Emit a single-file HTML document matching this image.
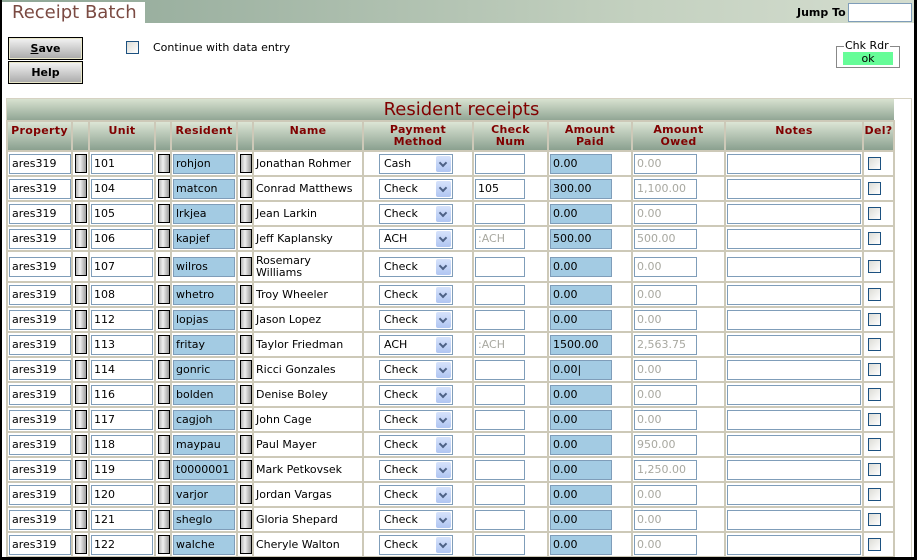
<!DOCTYPE html>
<html><head><meta charset="utf-8"><style>
*{box-sizing:border-box;margin:0;padding:0}
html,body{width:917px;height:560px;overflow:hidden}
body{background:#fff;font-family:"DejaVu Sans","Liberation Sans",sans-serif;font-size:11px;color:#000;position:relative}
.frame{position:absolute;left:0;top:0;width:917px;height:560px;border-left:2px solid #000;border-right:3px solid #000;border-bottom:3px solid #000}
.bar{position:absolute;left:2px;top:0;width:912px;height:23px;background:linear-gradient(90deg,#8ea696,#c4d1c0 70%,#d4ddcf)}
.tab{position:absolute;left:2px;top:2px;width:143px;height:21px;background:#fff;color:#7b4a42;font-size:18px;padding-left:10px;line-height:21px;white-space:nowrap}
.jump{position:absolute;left:797px;top:6px;font-weight:bold;font-size:11px}
.jin{position:absolute;left:848px;top:3px;width:64px;height:19px;border:1px solid #7f9db9;background:#fff}
.btn{position:absolute;left:8px;width:75px;height:23px;border:1px solid #000;background:linear-gradient(#f4f4f4,#a9a9a9);box-shadow:inset 0 0 0 1px #e8e6c8;text-align:center;font-weight:bold;line-height:21px;font-size:11px}
.cb{display:block;width:13px;height:13px;border:1px solid #1c5180;background:linear-gradient(135deg,#dcdcd6,#fff)}
.fs{position:absolute;left:836px;top:46px;width:64px;height:22px;border:1px solid #888}
.fs span{position:absolute;left:7px;top:-8px;background:#fff;padding:0 1px;font-size:11px}
.ok{position:absolute;left:6px;top:5px;width:50px;height:13px;background:#66fd98;text-align:center;line-height:13px}
.box{position:absolute;left:6px;top:98px;width:906px;height:460px;border:1px solid #d6d2c2;border-bottom:none}
.title{position:absolute;left:7px;top:99px;width:887px;height:22px;background:linear-gradient(#d8e2d0,#8ea392);color:#800000;font-size:18px;text-align:center;line-height:22px;padding-left:22px}
table{position:absolute;left:6px;top:120px;border-collapse:separate;border-spacing:2px;background:#cdc9b8;table-layout:fixed;width:889px}
td{background:#fff;height:23px;padding:0;vertical-align:middle;overflow:hidden;white-space:nowrap}
th{height:28px;background:linear-gradient(#dce5d5,#8aa08f);color:#800000;font-size:11px;font-weight:bold;line-height:12px;text-align:center;letter-spacing:.3px}
td.tall{height:29px}
.in{display:block;height:20px;border:1px solid #7f9db9;background:#fff;line-height:18px;padding-left:2px;font-size:11px}
.bl{background:#a3cbe3}
.gr{color:#a8a8a0}
.mb{display:block;width:12px;height:19px;border:1px solid #000;background:linear-gradient(90deg,#b8b8b8,#f0f0f0 40%,#9c9c9c);margin-left:2px}
.sel{display:block;width:74px;height:20px;border:1px solid #7f9db9;margin-left:15px;position:relative;line-height:18px;padding-left:4px}
.sel i{position:absolute;right:1px;top:1px;width:15px;height:16px;background:linear-gradient(#d6e2fb,#b0c6f2);border-radius:2px}
.sel i:after{content:"";position:absolute;left:4px;top:4px;width:4px;height:4px;border-right:2px solid #4d6185;border-bottom:2px solid #4d6185;transform:rotate(45deg)}
.nm{padding-left:2px;font-size:11px;white-space:normal;line-height:12px}
td .cb{margin-left:4px}
</style></head><body>
<div class="bar"></div>
<div class="tab">Receipt Batch</div>
<div class="jump">Jump To</div><div class="jin"></div>
<div class="btn" style="top:37px"><u>S</u>ave</div>
<div class="btn" style="top:61px">Help</div>
<span class="cb" style="position:absolute;left:126px;top:41px"></span>
<div style="position:absolute;left:153px;top:41px">Continue with data entry</div>
<div class="fs"><span>Chk Rdr</span><div class="ok">ok</div></div>
<div class="box"></div>
<div class="title">Resident receipts</div>
<table>
<colgroup><col style="width:63px"><col style="width:15px"><col style="width:64px"><col style="width:14px"><col style="width:64px"><col style="width:14px"><col style="width:108px"><col style="width:108px"><col style="width:73px"><col style="width:82px"><col style="width:91px"><col style="width:136px"><col style="width:29px"></colgroup>
<tr><th style="vertical-align:top;padding-top:3px">Property</th><th></th><th style="vertical-align:top;padding-top:3px">Unit</th><th></th><th style="vertical-align:top;padding-top:3px">Resident</th><th></th><th style="vertical-align:top;padding-top:3px">Name</th><th>Payment<br>Method</th><th>Check<br>Num</th><th>Amount<br>Paid</th><th>Amount<br>Owed</th><th style="vertical-align:top;padding-top:3px">Notes</th><th style="vertical-align:top;padding-top:3px">Del?</th></tr>
<tr><td><span class="in" style="margin-left:1px;width:62px">ares319</span></td><td><span class="mb"></span></td><td><span class="in" style="margin-left:1px;width:62px">101</span></td><td><span class="mb"></span></td><td><span class="in bl" style="margin-left:1px;width:62px">rohjon</span></td><td><span class="mb"></span></td><td class="nm">Jonathan Rohmer</td><td><span class="sel">Cash<i></i></span></td><td><span class="in" style="width:50px;margin-left:1px"></span></td><td><span class="in bl" style="width:62px;margin-left:1px">0.00</span></td><td><span class="in gr" style="width:63px;margin-left:1px">0.00</span></td><td><span class="in" style="width:134px;margin-left:1px"></span></td><td><span class="cb"></span></td></tr>
<tr><td><span class="in" style="margin-left:1px;width:62px">ares319</span></td><td><span class="mb"></span></td><td><span class="in" style="margin-left:1px;width:62px">104</span></td><td><span class="mb"></span></td><td><span class="in bl" style="margin-left:1px;width:62px">matcon</span></td><td><span class="mb"></span></td><td class="nm">Conrad Matthews</td><td><span class="sel">Check<i></i></span></td><td><span class="in" style="width:50px;margin-left:1px">105</span></td><td><span class="in bl" style="width:62px;margin-left:1px">300.00</span></td><td><span class="in gr" style="width:63px;margin-left:1px">1,100.00</span></td><td><span class="in" style="width:134px;margin-left:1px"></span></td><td><span class="cb"></span></td></tr>
<tr><td><span class="in" style="margin-left:1px;width:62px">ares319</span></td><td><span class="mb"></span></td><td><span class="in" style="margin-left:1px;width:62px">105</span></td><td><span class="mb"></span></td><td><span class="in bl" style="margin-left:1px;width:62px">lrkjea</span></td><td><span class="mb"></span></td><td class="nm">Jean Larkin</td><td><span class="sel">Check<i></i></span></td><td><span class="in" style="width:50px;margin-left:1px"></span></td><td><span class="in bl" style="width:62px;margin-left:1px">0.00</span></td><td><span class="in gr" style="width:63px;margin-left:1px">0.00</span></td><td><span class="in" style="width:134px;margin-left:1px"></span></td><td><span class="cb"></span></td></tr>
<tr><td><span class="in" style="margin-left:1px;width:62px">ares319</span></td><td><span class="mb"></span></td><td><span class="in" style="margin-left:1px;width:62px">106</span></td><td><span class="mb"></span></td><td><span class="in bl" style="margin-left:1px;width:62px">kapjef</span></td><td><span class="mb"></span></td><td class="nm">Jeff Kaplansky</td><td><span class="sel">ACH<i></i></span></td><td><span class="in gr" style="width:50px;margin-left:1px">:ACH</span></td><td><span class="in bl" style="width:62px;margin-left:1px">500.00</span></td><td><span class="in gr" style="width:63px;margin-left:1px">500.00</span></td><td><span class="in" style="width:134px;margin-left:1px"></span></td><td><span class="cb"></span></td></tr>
<tr><td class="tall"><span class="in" style="margin-left:1px;width:62px">ares319</span></td><td class="tall"><span class="mb"></span></td><td class="tall"><span class="in" style="margin-left:1px;width:62px">107</span></td><td class="tall"><span class="mb"></span></td><td class="tall"><span class="in bl" style="margin-left:1px;width:62px">wilros</span></td><td class="tall"><span class="mb"></span></td><td class="nm tall">Rosemary<br>Williams</td><td class="tall"><span class="sel">Check<i></i></span></td><td class="tall"><span class="in" style="width:50px;margin-left:1px"></span></td><td class="tall"><span class="in bl" style="width:62px;margin-left:1px">0.00</span></td><td class="tall"><span class="in gr" style="width:63px;margin-left:1px">0.00</span></td><td class="tall"><span class="in" style="width:134px;margin-left:1px"></span></td><td class="tall"><span class="cb"></span></td></tr>
<tr><td><span class="in" style="margin-left:1px;width:62px">ares319</span></td><td><span class="mb"></span></td><td><span class="in" style="margin-left:1px;width:62px">108</span></td><td><span class="mb"></span></td><td><span class="in bl" style="margin-left:1px;width:62px">whetro</span></td><td><span class="mb"></span></td><td class="nm">Troy Wheeler</td><td><span class="sel">Check<i></i></span></td><td><span class="in" style="width:50px;margin-left:1px"></span></td><td><span class="in bl" style="width:62px;margin-left:1px">0.00</span></td><td><span class="in gr" style="width:63px;margin-left:1px">0.00</span></td><td><span class="in" style="width:134px;margin-left:1px"></span></td><td><span class="cb"></span></td></tr>
<tr><td><span class="in" style="margin-left:1px;width:62px">ares319</span></td><td><span class="mb"></span></td><td><span class="in" style="margin-left:1px;width:62px">112</span></td><td><span class="mb"></span></td><td><span class="in bl" style="margin-left:1px;width:62px">lopjas</span></td><td><span class="mb"></span></td><td class="nm">Jason Lopez</td><td><span class="sel">Check<i></i></span></td><td><span class="in" style="width:50px;margin-left:1px"></span></td><td><span class="in bl" style="width:62px;margin-left:1px">0.00</span></td><td><span class="in gr" style="width:63px;margin-left:1px">0.00</span></td><td><span class="in" style="width:134px;margin-left:1px"></span></td><td><span class="cb"></span></td></tr>
<tr><td><span class="in" style="margin-left:1px;width:62px">ares319</span></td><td><span class="mb"></span></td><td><span class="in" style="margin-left:1px;width:62px">113</span></td><td><span class="mb"></span></td><td><span class="in bl" style="margin-left:1px;width:62px">fritay</span></td><td><span class="mb"></span></td><td class="nm">Taylor Friedman</td><td><span class="sel">ACH<i></i></span></td><td><span class="in gr" style="width:50px;margin-left:1px">:ACH</span></td><td><span class="in bl" style="width:62px;margin-left:1px">1500.00</span></td><td><span class="in gr" style="width:63px;margin-left:1px">2,563.75</span></td><td><span class="in" style="width:134px;margin-left:1px"></span></td><td><span class="cb"></span></td></tr>
<tr><td><span class="in" style="margin-left:1px;width:62px">ares319</span></td><td><span class="mb"></span></td><td><span class="in" style="margin-left:1px;width:62px">114</span></td><td><span class="mb"></span></td><td><span class="in bl" style="margin-left:1px;width:62px">gonric</span></td><td><span class="mb"></span></td><td class="nm">Ricci Gonzales</td><td><span class="sel">Check<i></i></span></td><td><span class="in" style="width:50px;margin-left:1px"></span></td><td><span class="in bl" style="width:62px;margin-left:1px">0.00|</span></td><td><span class="in gr" style="width:63px;margin-left:1px">0.00</span></td><td><span class="in" style="width:134px;margin-left:1px"></span></td><td><span class="cb"></span></td></tr>
<tr><td><span class="in" style="margin-left:1px;width:62px">ares319</span></td><td><span class="mb"></span></td><td><span class="in" style="margin-left:1px;width:62px">116</span></td><td><span class="mb"></span></td><td><span class="in bl" style="margin-left:1px;width:62px">bolden</span></td><td><span class="mb"></span></td><td class="nm">Denise Boley</td><td><span class="sel">Check<i></i></span></td><td><span class="in" style="width:50px;margin-left:1px"></span></td><td><span class="in bl" style="width:62px;margin-left:1px">0.00</span></td><td><span class="in gr" style="width:63px;margin-left:1px">0.00</span></td><td><span class="in" style="width:134px;margin-left:1px"></span></td><td><span class="cb"></span></td></tr>
<tr><td><span class="in" style="margin-left:1px;width:62px">ares319</span></td><td><span class="mb"></span></td><td><span class="in" style="margin-left:1px;width:62px">117</span></td><td><span class="mb"></span></td><td><span class="in bl" style="margin-left:1px;width:62px">cagjoh</span></td><td><span class="mb"></span></td><td class="nm">John Cage</td><td><span class="sel">Check<i></i></span></td><td><span class="in" style="width:50px;margin-left:1px"></span></td><td><span class="in bl" style="width:62px;margin-left:1px">0.00</span></td><td><span class="in gr" style="width:63px;margin-left:1px">0.00</span></td><td><span class="in" style="width:134px;margin-left:1px"></span></td><td><span class="cb"></span></td></tr>
<tr><td><span class="in" style="margin-left:1px;width:62px">ares319</span></td><td><span class="mb"></span></td><td><span class="in" style="margin-left:1px;width:62px">118</span></td><td><span class="mb"></span></td><td><span class="in bl" style="margin-left:1px;width:62px">maypau</span></td><td><span class="mb"></span></td><td class="nm">Paul Mayer</td><td><span class="sel">Check<i></i></span></td><td><span class="in" style="width:50px;margin-left:1px"></span></td><td><span class="in bl" style="width:62px;margin-left:1px">0.00</span></td><td><span class="in gr" style="width:63px;margin-left:1px">950.00</span></td><td><span class="in" style="width:134px;margin-left:1px"></span></td><td><span class="cb"></span></td></tr>
<tr><td><span class="in" style="margin-left:1px;width:62px">ares319</span></td><td><span class="mb"></span></td><td><span class="in" style="margin-left:1px;width:62px">119</span></td><td><span class="mb"></span></td><td><span class="in bl" style="margin-left:1px;width:62px">t0000001</span></td><td><span class="mb"></span></td><td class="nm">Mark Petkovsek</td><td><span class="sel">Check<i></i></span></td><td><span class="in" style="width:50px;margin-left:1px"></span></td><td><span class="in bl" style="width:62px;margin-left:1px">0.00</span></td><td><span class="in gr" style="width:63px;margin-left:1px">1,250.00</span></td><td><span class="in" style="width:134px;margin-left:1px"></span></td><td><span class="cb"></span></td></tr>
<tr><td><span class="in" style="margin-left:1px;width:62px">ares319</span></td><td><span class="mb"></span></td><td><span class="in" style="margin-left:1px;width:62px">120</span></td><td><span class="mb"></span></td><td><span class="in bl" style="margin-left:1px;width:62px">varjor</span></td><td><span class="mb"></span></td><td class="nm">Jordan Vargas</td><td><span class="sel">Check<i></i></span></td><td><span class="in" style="width:50px;margin-left:1px"></span></td><td><span class="in bl" style="width:62px;margin-left:1px">0.00</span></td><td><span class="in gr" style="width:63px;margin-left:1px">0.00</span></td><td><span class="in" style="width:134px;margin-left:1px"></span></td><td><span class="cb"></span></td></tr>
<tr><td><span class="in" style="margin-left:1px;width:62px">ares319</span></td><td><span class="mb"></span></td><td><span class="in" style="margin-left:1px;width:62px">121</span></td><td><span class="mb"></span></td><td><span class="in bl" style="margin-left:1px;width:62px">sheglo</span></td><td><span class="mb"></span></td><td class="nm">Gloria Shepard</td><td><span class="sel">Check<i></i></span></td><td><span class="in" style="width:50px;margin-left:1px"></span></td><td><span class="in bl" style="width:62px;margin-left:1px">0.00</span></td><td><span class="in gr" style="width:63px;margin-left:1px">0.00</span></td><td><span class="in" style="width:134px;margin-left:1px"></span></td><td><span class="cb"></span></td></tr>
<tr><td><span class="in" style="margin-left:1px;width:62px">ares319</span></td><td><span class="mb"></span></td><td><span class="in" style="margin-left:1px;width:62px">122</span></td><td><span class="mb"></span></td><td><span class="in bl" style="margin-left:1px;width:62px">walche</span></td><td><span class="mb"></span></td><td class="nm">Cheryle Walton</td><td><span class="sel">Check<i></i></span></td><td><span class="in" style="width:50px;margin-left:1px"></span></td><td><span class="in bl" style="width:62px;margin-left:1px">0.00</span></td><td><span class="in gr" style="width:63px;margin-left:1px">0.00</span></td><td><span class="in" style="width:134px;margin-left:1px"></span></td><td><span class="cb"></span></td></tr>
</table>
<div class="frame"></div>
</body></html>
